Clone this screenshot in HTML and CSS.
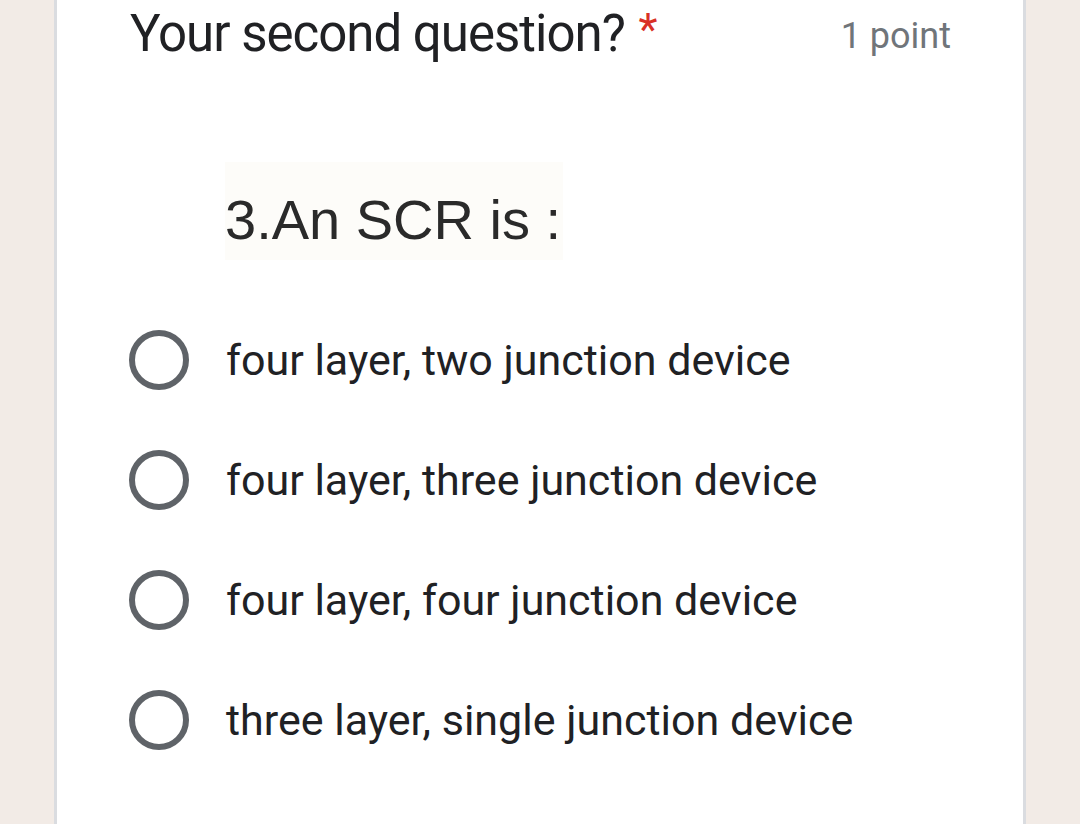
FILE: index.html
```html
<!DOCTYPE html>
<html lang="en">
<head>
  <meta charset="UTF-8">
  <meta name="viewport" content="width=device-width, initial-scale=1.0">
  <title>Your second question?</title>
  <link rel="stylesheet" href="styles.css">
</head>
<body>
  <div class="card">
    <div class="question-head">
      <div class="question-title">Your second question? <span class="required">*</span></div>
      <div class="points">1 point</div>
    </div>

    <div class="question-image">
      <span>3.An SCR is :</span>
    </div>

    <div class="options">
      <label class="option"><span class="radio"></span><span class="option-text">four layer, two junction device</span></label>
      <label class="option"><span class="radio"></span><span class="option-text">four layer, three junction device</span></label>
      <label class="option"><span class="radio"></span><span class="option-text">four layer, four junction device</span></label>
      <label class="option"><span class="radio"></span><span class="option-text">three layer, single junction device</span></label>
    </div>
  </div>
</body>
</html>
```

FILE: styles.css
```css
html, body {
  height: 100%;
}
body {
  margin: 0;
  background-color: #f2ebe6;
  font-family: Roboto, "Liberation Sans", sans-serif;
  color: #202124;
}
.card {
  box-sizing: border-box;
  width: 972px;
  height: 100%;
  margin-left: 54px;
  background-color: #fff;
  border-left: 3px solid #dadce0;
  border-right: 3px solid #dadce0;
  padding: 0 72px 0 73px;
}
.question-head {
  display: flex;
  justify-content: space-between;
  align-items: flex-start;
}
.question-title {
  font-size: 51px;
  line-height: 56px;
  letter-spacing: -1px;
  padding-top: 2px;
}
.required {
  color: #d93025;
  font-size: 44px;
  vertical-align: 6px;
  margin-left: 2px;
}
.points {
  font-size: 36px;
  line-height: 42px;
  color: #70757a;
  padding-top: 15px;
}
.question-image {
  margin: 100px 0 0 95px;
  width: 338px;
  height: 98px;
  background-color: #fdfcf9;
  display: flex;
  align-items: center;
}
.question-image span {
  font-family: "Liberation Sans", Arial, sans-serif;
  font-size: 56px;
  color: #2a2a2a;
  padding-top: 16px;
}
.options {
  display: flex;
  flex-direction: column;
  gap: 60px;
  margin-top: 70px;
}
.option {
  display: flex;
  align-items: center;
  height: 60px;
}
.radio {
  box-sizing: border-box;
  width: 60px;
  height: 60px;
  border: 6px solid #5f6368;
  border-radius: 50%;
  flex-shrink: 0;
  margin-left: -1px;
  margin-right: 37px;
}
.option-text {
  font-size: 43px;
  color: #202124;
}
```
